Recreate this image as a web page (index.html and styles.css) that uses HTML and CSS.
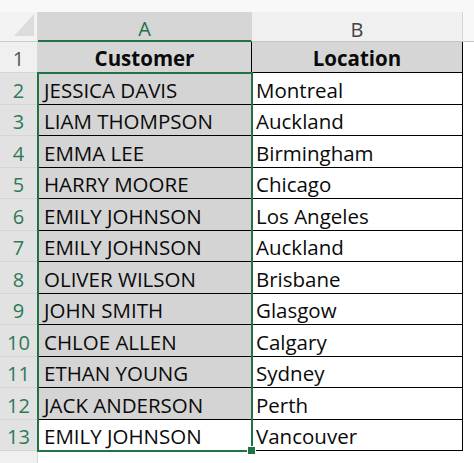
FILE: index.html
```html
<!DOCTYPE html>
<html>
<head>
<meta charset="utf-8">
<link rel="stylesheet" href="styles.css">
</head>
<body>
<div class="topband"></div>
<div class="sheet">
  <div class="corner"><div class="tri"></div></div>
  <div class="colhead sel">A</div>
  <div class="colhead">B</div>
  <div class="colhead rest"></div>

  <div class="rowhead">1</div>
  <div class="cell hdr">Customer</div>
  <div class="cell hdr b">Location</div>
  <div class="rest"></div>

  <div class="rowhead sel">2</div><div class="cell a">JESSICA DAVIS</div><div class="cell b">Montreal</div><div class="rest"></div>
  <div class="rowhead sel">3</div><div class="cell a">LIAM THOMPSON</div><div class="cell b">Auckland</div><div class="rest"></div>
  <div class="rowhead sel">4</div><div class="cell a">EMMA LEE</div><div class="cell b">Birmingham</div><div class="rest"></div>
  <div class="rowhead sel">5</div><div class="cell a">HARRY MOORE</div><div class="cell b">Chicago</div><div class="rest"></div>
  <div class="rowhead sel">6</div><div class="cell a">EMILY JOHNSON</div><div class="cell b">Los Angeles</div><div class="rest"></div>
  <div class="rowhead sel">7</div><div class="cell a">EMILY JOHNSON</div><div class="cell b">Auckland</div><div class="rest"></div>
  <div class="rowhead sel">8</div><div class="cell a">OLIVER WILSON</div><div class="cell b">Brisbane</div><div class="rest"></div>
  <div class="rowhead sel">9</div><div class="cell a">JOHN SMITH</div><div class="cell b">Glasgow</div><div class="rest"></div>
  <div class="rowhead sel">10</div><div class="cell a">CHLOE ALLEN</div><div class="cell b">Calgary</div><div class="rest"></div>
  <div class="rowhead sel">11</div><div class="cell a">ETHAN YOUNG</div><div class="cell b">Sydney</div><div class="rest"></div>
  <div class="rowhead sel">12</div><div class="cell a">JACK ANDERSON</div><div class="cell b">Perth</div><div class="rest"></div>
  <div class="rowhead sel">13</div><div class="cell a white">EMILY JOHNSON</div><div class="cell b">Vancouver</div><div class="rest"></div>

  <div class="rowhead last">14</div><div class="empty"></div><div class="empty"></div><div class="rest"></div>

  <div class="selection"><div class="handle"></div></div>
</div>
</body>
</html>
```

FILE: styles.css
```css
html, body {
  margin: 0;
  padding: 0;
  background: #ffffff;
  overflow: hidden;
}
body {
  width: 474px;
  height: 463px;
  font-family: "Open Sans", Lato, sans-serif;
}
.topband {
  height: 12px;
  background: #f8f8f8;
}
.sheet {
  position: relative;
  display: grid;
  grid-template-columns: 38px 214px 211px 11px;
  grid-template-rows: 30px 31px repeat(12, 31.5px) 31px;
}
.corner {
  background: #f3f3f3;
  border-right: 1px solid #dadada;
  border-bottom: 1px solid #cccccc;
  position: relative;
}
.tri {
  position: absolute;
  right: 3px;
  bottom: 5px;
  width: 0;
  height: 0;
  border-left: 20px solid transparent;
  border-bottom: 22px solid #dcdcdc;
}
.colhead {
  background: #f0f0f0;
  border-right: 1px solid #d4d4d4;
  border-bottom: 1px solid #c4c4c4;
  color: #444;
  font-size: 20px;
  display: flex;
  align-items: center;
  justify-content: center;
  padding-top: 5px;
  box-sizing: border-box;
}
.colhead.sel {
  background: #d6d6d6;
  color: #217346;
  border-bottom: 2px solid #217346;
}
.colhead.rest {
  background: #f8f8f8;
  border-right: none;
}
.rowhead {
  background: #f0f0f0;
  border-right: 1px solid #d6d6d6;
  border-bottom: 1px solid #d6d6d6;
  color: #555;
  font-size: 20px;
  display: flex;
  align-items: flex-end;
  justify-content: center;
  padding-bottom: 0;
  box-sizing: border-box;
  line-height: 27px;
}
.rowhead.sel {
  background: #e2e2e2;
  color: #2e7a55;
}
.rowhead.last {
  align-items: flex-start;
  padding-top: 6px;
}
.cell {
  border-right: 1px solid #000;
  border-bottom: 1px solid #000;
  font-size: 20.5px;
  color: #0a0a0a;
  display: flex;
  align-items: flex-end;
  padding: 0 0 0 6px;
  line-height: 27px;
  box-sizing: border-box;
  white-space: nowrap;
  overflow: hidden;
}
.cell.hdr {
  background: #d6d6d6;
  font-weight: 700;
  justify-content: center;
  padding-left: 0;
}
.cell.a {
  background: #d4d4d4;
}
.cell.a.white {
  background: #ffffff;
}
.cell.b {
  background: #ffffff;
  padding-left: 4px;
}
.cell.hdr.b {
  background: #d6d6d6;
  padding-left: 0;
}
.rest {
  background: #ffffff;
}
.empty {
  background: #fff;
}
.selection {
  position: absolute;
  left: 37px;
  top: 60px;
  width: 216px;
  height: 380px;
  border: 2px solid #217346;
  box-sizing: border-box;
  pointer-events: none;
}
.handle {
  position: absolute;
  right: -5px;
  bottom: -5px;
  width: 7px;
  height: 7px;
  background: #217346;
  border: 1px solid #fff;
}
```
